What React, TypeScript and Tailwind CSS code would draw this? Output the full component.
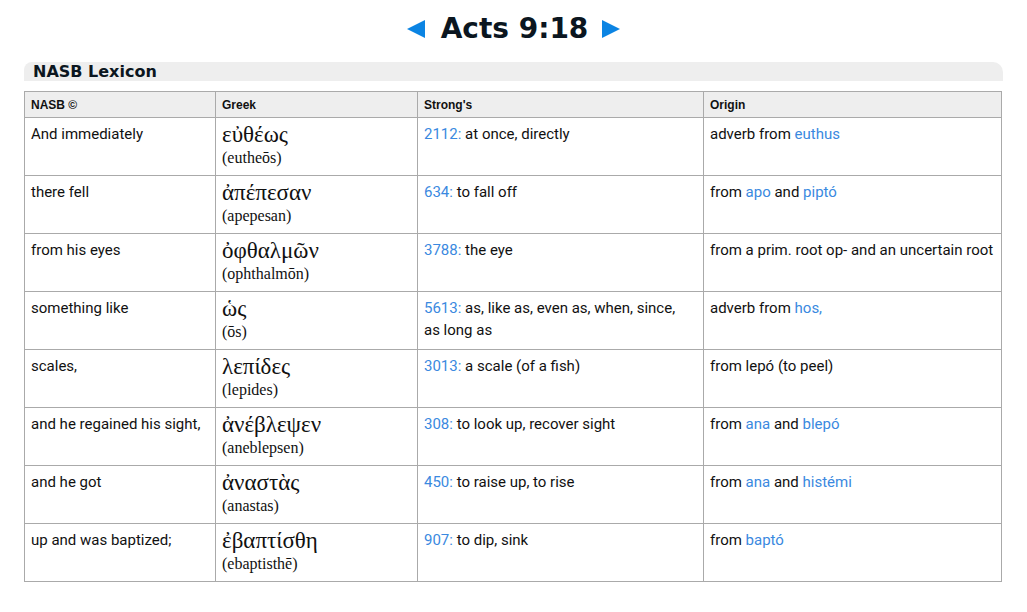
import React from "react";

type Part = { t: string; link?: boolean };
type Row = {
  nasb: string;
  greek: string;
  translit: string;
  num: string;
  def: string;
  origin: Part[];
};

const rows: Row[] = [
  { nasb: "And immediately", greek: "εὐθέως", translit: "(eutheōs)", num: "2112", def: "at once, directly", origin: [{ t: "adverb from " }, { t: "euthus", link: true }] },
  { nasb: "there fell", greek: "ἀπέπεσαν", translit: "(apepesan)", num: "634", def: "to fall off", origin: [{ t: "from " }, { t: "apo", link: true }, { t: " and " }, { t: "piptó", link: true }] },
  { nasb: "from his eyes", greek: "ὀφθαλμῶν", translit: "(ophthalmōn)", num: "3788", def: "the eye", origin: [{ t: "from a prim. root op- and an uncertain root" }] },
  { nasb: "something like", greek: "ὡς", translit: "(ōs)", num: "5613", def: "as, like as, even as, when, since, as long as", origin: [{ t: "adverb from " }, { t: "hos,", link: true }] },
  { nasb: "scales,", greek: "λεπίδες", translit: "(lepides)", num: "3013", def: "a scale (of a fish)", origin: [{ t: "from lepó (to peel)" }] },
  { nasb: "and he regained his sight,", greek: "ἀνέβλεψεν", translit: "(aneblepsen)", num: "308", def: "to look up, recover sight", origin: [{ t: "from " }, { t: "ana", link: true }, { t: " and " }, { t: "blepó", link: true }] },
  { nasb: "and he got", greek: "ἀναστὰς", translit: "(anastas)", num: "450", def: "to raise up, to rise", origin: [{ t: "from " }, { t: "ana", link: true }, { t: " and " }, { t: "histémi", link: true }] },
  { nasb: "up and was baptized;", greek: "ἐβαπτίσθη", translit: "(ebaptisthē)", num: "907", def: "to dip, sink", origin: [{ t: "from " }, { t: "baptó", link: true }] },
];

export default function App() {
  return (
    <div className="w-[1027px] h-[612px] bg-white text-[#111] font-['Roboto',sans-serif]">
      <div className="flex items-center justify-center pt-[11px] h-[46px]">
        <svg width="19" height="18" viewBox="0 0 19 18" className="mr-[15px]">
          <polygon points="0,9 18,0 18,18" fill="#0b84e3" />
        </svg>
        <span className="font-['Verdana','DejaVu_Sans',sans-serif] font-bold text-[28px] leading-none text-[#0b1620]">
          Acts 9:18
        </span>
        <svg width="19" height="18" viewBox="0 0 19 18" className="ml-[13px]">
          <polygon points="1,0 19,9 1,18" fill="#0b84e3" />
        </svg>
      </div>
      <div className="mx-[24px] mt-[16px]">
        <div className="h-[19px] bg-[#eeeeee] rounded-tl-[8px] rounded-tr-[10px] pl-[9px] flex items-center">
          <span className="font-['DejaVu_Sans',sans-serif] font-bold text-[16px] leading-none text-[#0b1620]">
            NASB Lexicon
          </span>
        </div>
        <table className="mt-[10px] w-[977px] border-collapse table-fixed">
          <colgroup>
            <col className="w-[191px]" />
            <col className="w-[202px]" />
            <col className="w-[286px]" />
            <col className="w-[298px]" />
          </colgroup>
          <thead>
            <tr className="h-[26px] bg-[#eeeeee]">
              {["NASB ©", "Greek", "Strong's", "Origin"].map((h) => (
                <th
                  key={h}
                  className="border border-[#aaaaaa] text-left align-middle px-[6px] font-['Liberation_Sans',Arial,sans-serif] font-bold text-[12px] text-[#111]"
                >
                  {h}
                </th>
              ))}
            </tr>
          </thead>
          <tbody>
            {rows.map((r, i) => (
              <tr key={i} className="h-[58px]">
                <td className="border border-[#aaaaaa] align-top px-[6px] pt-[5px] text-[15px] leading-[22px]">
                  {r.nasb}
                </td>
                <td className="border border-[#aaaaaa] align-top px-[6px] pt-[4px]">
                  <div className="font-['Liberation_Serif',serif] text-[23px] leading-[26px] text-[#111]">
                    {r.greek}
                  </div>
                  <div className="font-['Liberation_Serif',serif] text-[16px] leading-[20px] text-[#111]">
                    {r.translit}
                  </div>
                </td>
                <td className="border border-[#aaaaaa] align-top pl-[6px] pr-[14px] pt-[5px] text-[15px] leading-[22px]">
                  <span className="text-[#3a89e0]">{r.num}:</span> {r.def}
                </td>
                <td className="border border-[#aaaaaa] align-top px-[6px] pt-[5px] text-[15px] leading-[22px]">
                  {r.origin.map((p, j) =>
                    p.link ? (
                      <span key={j} className="text-[#3a89e0]">
                        {p.t}
                      </span>
                    ) : (
                      <span key={j}>{p.t}</span>
                    )
                  )}
                </td>
              </tr>
            ))}
          </tbody>
        </table>
      </div>
    </div>
  );
}
